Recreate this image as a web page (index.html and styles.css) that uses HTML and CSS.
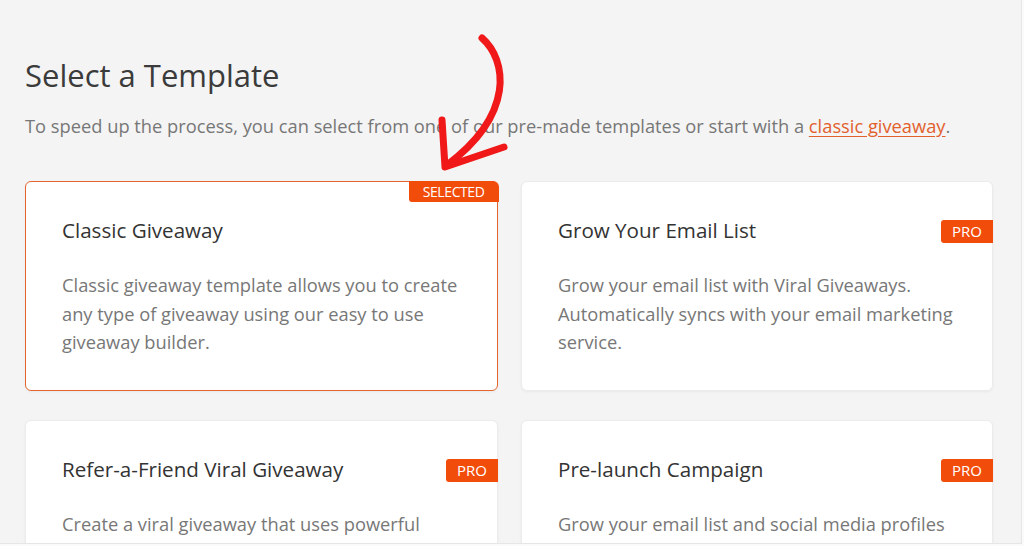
FILE: index.html
```html
<!DOCTYPE html>
<html lang="en">
  <head>
    <title>Select a Template</title>
    <meta charset="utf-8" />
    <link rel="stylesheet" href="styles.css">
  </head>
  <body>
    <div id="page">
      <h1 class="heading">Select a Template</h1>
      <p class="intro">
        To speed up the process, you can select from one of our pre-made templates or start with a
        <a href="#">classic giveaway</a>.
      </p>

      <div class="templates">
        <div class="card selected">
          <span class="badge badge-selected">Selected</span>
          <h2 class="card-title">Classic Giveaway</h2>
          <p class="card-text">Classic giveaway template allows you to create any type of giveaway using our easy to use giveaway builder.</p>
        </div>
        <div class="card">
          <span class="badge badge-pro">PRO</span>
          <h2 class="card-title">Grow Your Email List</h2>
          <p class="card-text">Grow your email list with Viral Giveaways. Automatically syncs with your email marketing service.</p>
        </div>
        <div class="card">
          <span class="badge badge-pro">PRO</span>
          <h2 class="card-title">Refer-a-Friend Viral Giveaway</h2>
          <p class="card-text">Create a viral giveaway that uses powerful referral tracking to grow your audience.</p>
        </div>
        <div class="card">
          <span class="badge badge-pro">PRO</span>
          <h2 class="card-title">Pre-launch Campaign</h2>
          <p class="card-text">Grow your email list and social media profiles before you launch your product.</p>
        </div>
      </div>

      <!-- hand drawn arrow pointing at the selected card -->
      <svg class="arrow" width="1024" height="546" viewBox="0 0 1024 546">
        <path d="M482,38 C507,60 515,114 447,165" fill="none" stroke="#f01818" stroke-width="7" stroke-linecap="round" />
        <path d="M442,120 L445,167 L504,147" fill="none" stroke="#f01818" stroke-width="7" stroke-linecap="round" stroke-linejoin="round" />
      </svg>
    </div>
  </body>
</html>
```

FILE: styles.css
```css
html {
  height: 100%;
}
body {
  margin: 0;
  padding: 0;
  background: #fafafa;
  font-family: "Open Sans", sans-serif;
  height: 100%;
  overflow: hidden;
}

#page {
  position: relative;
  width: 996px;
  height: 543px;
  padding-left: 25px;
  background: #f4f4f4;
  border-right: 1px solid #e6e6e6;
  border-bottom: 1px solid #e6e6e6;
  overflow: hidden;
}

.heading {
  margin: 0;
  padding-top: 55px;
  font-size: 31px;
  font-weight: 400;
  line-height: 40px;
  color: #3b3b3b;
}

.intro {
  margin: 18px 0 0;
  font-size: 18.3px;
  line-height: 26px;
  color: #777;
}

.intro a {
  color: #e2602c;
  text-decoration: underline;
  text-underline-offset: 3px;
}

.templates {
  display: grid;
  grid-template-columns: 473px 472px;
  column-gap: 23px;
  row-gap: 29px;
  margin-top: 42px;
}

.card {
  position: relative;
  box-sizing: border-box;
  height: 210px;
  padding: 33px 36px 20px;
  background: #fff;
  border: 1px solid #ececec;
  border-radius: 6px;
  box-shadow: 0 1px 3px rgba(0, 0, 0, 0.05);
}

.card.selected {
  border: 1.5px solid #e4652f;
}

.card-title {
  margin: 0;
  font-size: 20.6px;
  font-weight: 400;
  line-height: 30px;
  color: #333;
}

.card-text {
  margin: 26px 0 0;
  font-size: 18.3px;
  line-height: 28.5px;
  color: #777;
}

.badge {
  position: absolute;
  right: -1px;
  color: #fff;
  background: #f24c0b;
}

.badge-selected {
  top: -1.5px;
  right: -1.5px;
  padding: 0 14px;
  font-size: 14px;
  line-height: 21px;
  letter-spacing: -0.4px;
  text-transform: uppercase;
  border-radius: 0 6px 0 3px;
}

.badge-pro {
  top: 38px;
  padding: 0 11px;
  font-size: 15px;
  line-height: 23px;
  border-radius: 3px 0 0 3px;
}

.arrow {
  position: absolute;
  top: 0;
  left: 0;
  pointer-events: none;
}
```
